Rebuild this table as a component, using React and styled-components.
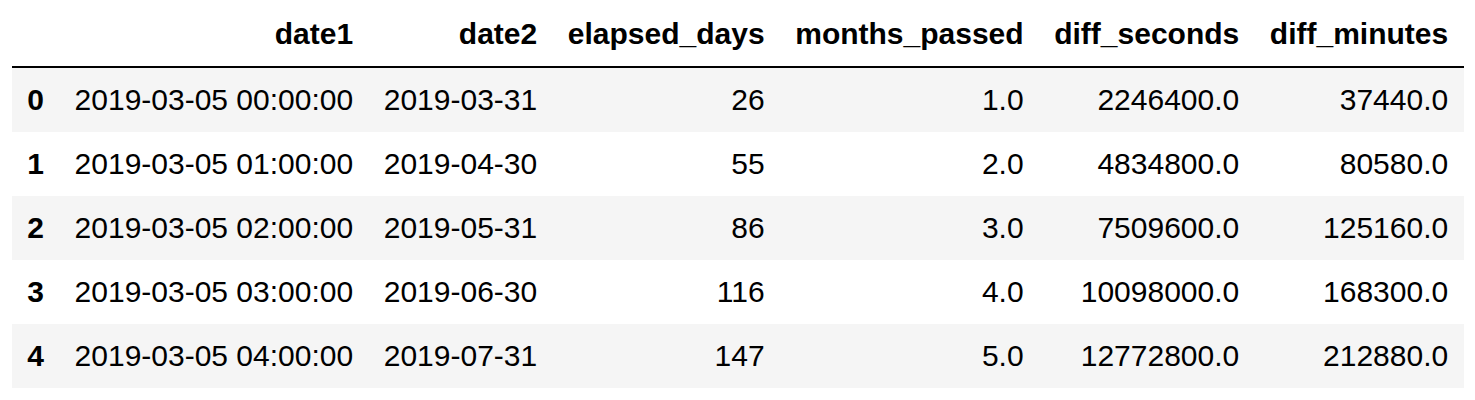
import React from "react";
import styled, { createGlobalStyle } from "styled-components";

const GlobalStyle = createGlobalStyle`
  body {
    margin: 0;
    background: #ffffff;
    font-family: "Liberation Sans", Arial, sans-serif;
  }
`;

const Frame = styled.div`
  padding: 2px 12px 0;
`;

const DataFrame = styled.table`
  border-collapse: collapse;
  border-spacing: 0;
  border: none;
  font-size: 30px;
  color: #000000;
  table-layout: auto;
`;

const HeadRow = styled.tr`
  border-bottom: 2px solid #000000;
`;

const HeadCell = styled.th`
  padding: 15px 15.3px;
  text-align: right;
  font-weight: bold;
  line-height: normal;
  white-space: nowrap;
  vertical-align: middle;
`;

const BodyRow = styled.tr`
  background: ${props => (props.striped ? "#f5f5f5" : "#ffffff")};
`;

const IndexCell = styled.th`
  padding: 15px 15.3px;
  text-align: right;
  font-weight: bold;
  line-height: normal;
  white-space: nowrap;
`;

const Cell = styled.td`
  padding: 15px 15.3px;
  text-align: right;
  line-height: normal;
  white-space: nowrap;
`;

const columns = [
  "date1",
  "date2",
  "elapsed_days",
  "months_passed",
  "diff_seconds",
  "diff_minutes",
];

const rows = [
  ["2019-03-05 00:00:00", "2019-03-31", "26", "1.0", "2246400.0", "37440.0"],
  ["2019-03-05 01:00:00", "2019-04-30", "55", "2.0", "4834800.0", "80580.0"],
  ["2019-03-05 02:00:00", "2019-05-31", "86", "3.0", "7509600.0", "125160.0"],
  ["2019-03-05 03:00:00", "2019-06-30", "116", "4.0", "10098000.0", "168300.0"],
  ["2019-03-05 04:00:00", "2019-07-31", "147", "5.0", "12772800.0", "212880.0"],
];

export default function App() {
  return (
    <>
      <GlobalStyle />
      <Frame>
        <DataFrame>
          <thead>
            <HeadRow>
              <HeadCell />
              {columns.map(col => (
                <HeadCell key={col}>{col}</HeadCell>
              ))}
            </HeadRow>
          </thead>
          <tbody>
            {rows.map((row, index) => (
              <BodyRow key={index} striped={index % 2 === 0}>
                <IndexCell>{index}</IndexCell>
                {row.map((value, i) => (
                  <Cell key={`${index}_${i}`}>{value}</Cell>
                ))}
              </BodyRow>
            ))}
          </tbody>
        </DataFrame>
      </Frame>
    </>
  );
}
